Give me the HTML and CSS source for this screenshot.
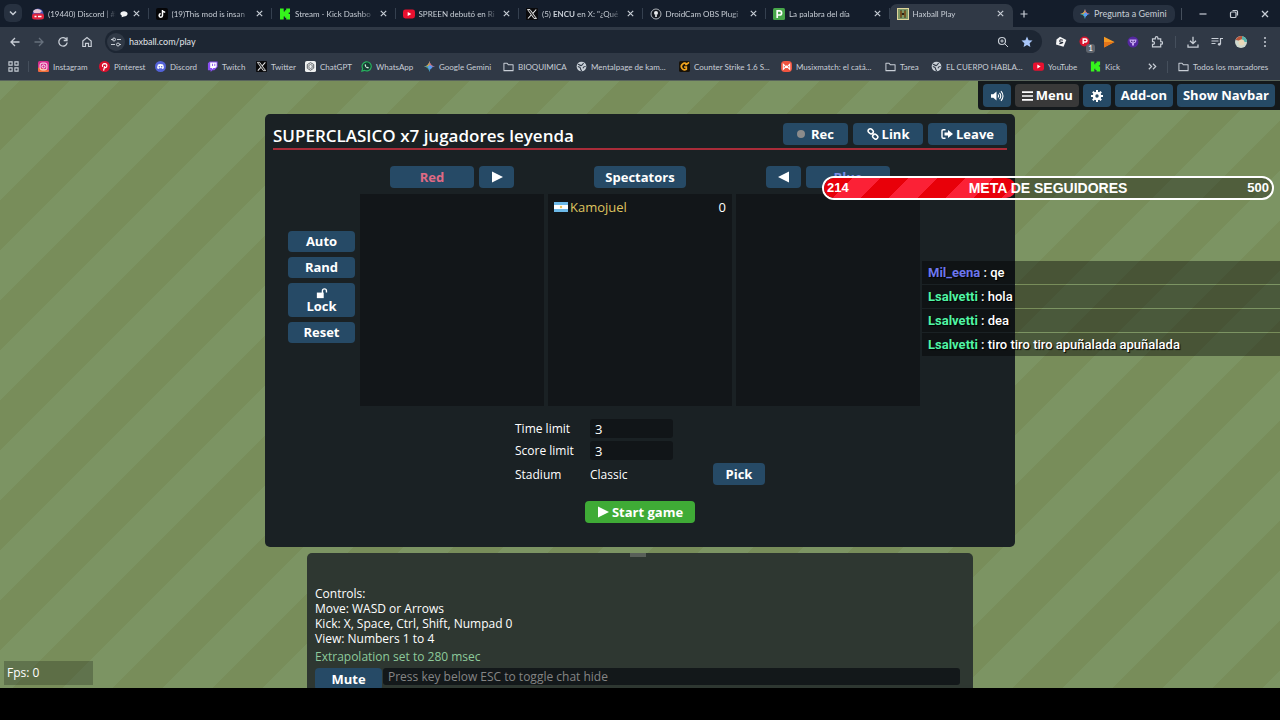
FILE: index.html
```html
<!DOCTYPE html>
<html lang="es">
<head>
  <meta charset="UTF-8">
  <title>Haxball Play</title>
  <meta name="viewport" content="width=device-width, initial-scale=1">
  <link rel="stylesheet" href="styles.css">
</head>
<body>

  <!-- Shared icons -->
  <svg class="sprite" aria-hidden="true">
    <symbol id="close" viewBox="0 0 10 10"><path d="M2 2l6 6M8 2l-6 6" stroke="currentColor" stroke-width="1.3" fill="none"/></symbol>
    <symbol id="folder" viewBox="0 0 12 12"><path d="M1 2.500h3.500l1.200 1.500H11v6.500H1z" fill="none" stroke="currentColor" stroke-width="1.100" stroke-linejoin="round"/></symbol>
    <symbol id="globe" viewBox="0 0 12 12"><circle cx="6" cy="6" r="5.300" fill="#c9d0d8"/><path d="M2 3.500c2 0 2 1.500 3.500 1.500S7 3 8.500 2.500M2 6c2 .5 3 1 3 2.500S6 10 6 11M10.500 6C9 6 7.500 6.500 8 8" stroke="#303946" stroke-width="1.200" fill="none"/></symbol>
    <symbol id="kick" viewBox="0 0 12 12"><path fill="#35f51c" d="M1 .5h3.700v3h1.200V2.200h1.300V.5H11v4H9.700v1.500H11v5.500H7.200V9.800H5.900V8.500H4.700v3H1z"/></symbol>
    <symbol id="youtube" viewBox="0 0 12 12"><rect x="0" y="1.500" width="12" height="9" rx="2.400" fill="#e9102f"/><path d="M4.700 3.900L8.300 6 4.700 8.100z" fill="#fff"/></symbol>
    <symbol id="x-logo" viewBox="0 0 12 12"><rect width="12" height="12" rx="1" fill="#0a0a0c"/><path d="M1.500 1.500h2.500l6.500 9H8z" fill="#333" stroke="#e8e8e8" stroke-width=".9"/><path d="M10.200 1.500L6.800 5.300M5.200 7L2 10.500" stroke="#e8e8e8" stroke-width="1.100"/></symbol>
    <symbol id="discord" viewBox="0 0 12 12"><circle cx="6" cy="6" r="6" fill="#5362d8"/><path d="M3.200 3.800q2.800-1 5.600 0 1 2 .9 4.200l-1.700.8-.6-.9H4.600l-.6.9L2.300 8q-.1-2.200.9-4.200z" fill="#fff"/><circle cx="4.700" cy="6.300" r=".8" fill="#5362d8"/><circle cx="7.300" cy="6.300" r=".8" fill="#5362d8"/></symbol>
    <symbol id="gemini" viewBox="0 0 12 12"><path d="M6 0q.8 5.200 6 6-5.200.8-6 6-.8-5.200-6-6 5.200-.8 6-6z" fill="#4f8df0"/><path d="M6 0q.8 5.200 6 6H6z" fill="#e5675a"/><path d="M0 6q5.200-.8 6-6v6z" fill="#dca637"/><path d="M0 6q5.200.8 6 6V6z" fill="#45a87c"/><circle cx="6.500" cy="6.500" r="2.200" fill="#5b9bf3"/></symbol>
    <symbol id="play" viewBox="0 0 12 12"><path d="M1 .5L12 6 1 11.500z" fill="currentColor"/></symbol>
  </svg>

  <!-- Browser window -->
  <header class="browser">
    <div class="tab-strip">
      <button class="tab-search" aria-label="Buscar pestañas"><svg viewBox="0 0 10 10"><path d="M2 3.500l3 3 3-3" fill="none" stroke="currentColor" stroke-width="1.500"/></svg></button>
      <nav class="tabs" aria-label="Pestañas">
        <div class="tab">
          <svg class="fav" viewBox="0 0 12 12"><circle cx="6" cy="6" r="5.500" fill="#4c57bb"/><path d="M1 3q4-4 9 0l-2 2H2z" fill="#e8c9d4"/><rect x="0" y="5.500" width="12" height="6" rx="2.500" fill="#e0233c"/><path d="M2.500 8.500h2M6 8.500h3.500" stroke="#fff" stroke-width="1.300"/></svg>
          <a href="#">(19440) Discord | #⊦</a>
          <svg class="bubble" viewBox="0 0 10 10"><path d="M5 1.500c2.500 0 4.500 1.300 4.500 3.200S7.500 8 5 8L2 9l.4-1.800C1.200 6.500.5 5.700.5 4.700.5 2.800 2.500 1.500 5 1.500z" fill="#f2f4f6"/></svg>
          <button class="close" aria-label="Cerrar"><svg><use href="#close"/></svg></button>
        </div>
        <div class="tab">
          <svg class="fav" viewBox="0 0 12 12"><rect width="12" height="12" rx="2" fill="#050507"/><path d="M6.500 2v5.500a1.700 1.700 0 1 1-1.700-1.700M6.500 2q.3 2 2.700 2.200" fill="none" stroke="#fff" stroke-width="1.500"/></svg>
          <a href="#">(19)This mod is insan</a>
          <button class="close" aria-label="Cerrar"><svg><use href="#close"/></svg></button>
        </div>
        <div class="tab">
          <svg class="fav"><use href="#kick"/></svg>
          <a href="#">Stream - Kick Dashbo</a>
          <button class="close" aria-label="Cerrar"><svg><use href="#close"/></svg></button>
        </div>
        <div class="tab">
          <svg class="fav"><use href="#youtube"/></svg>
          <a href="#">SPREEN debutó en Ri</a>
          <button class="close" aria-label="Cerrar"><svg><use href="#close"/></svg></button>
        </div>
        <div class="tab">
          <svg class="fav"><use href="#x-logo"/></svg>
          <a href="#">(5) <b>ENCU</b> en X: "¿Qué</a>
          <button class="close" aria-label="Cerrar"><svg><use href="#close"/></svg></button>
        </div>
        <div class="tab">
          <svg class="fav" viewBox="0 0 12 12"><circle cx="6" cy="6" r="5" fill="#14181f" stroke="#aeb4bb" stroke-width="1"/><circle cx="6" cy="5" r="2" fill="#e8eaec"/><path d="M5 6h2v3H5z" fill="#c4c8cc"/></svg>
          <a href="#">DroidCam OBS Plugi</a>
          <button class="close" aria-label="Cerrar"><svg><use href="#close"/></svg></button>
        </div>
        <div class="tab">
          <svg class="fav" viewBox="0 0 12 12"><rect width="12" height="12" rx="1.500" fill="#47a64a"/><path d="M4.200 10V2.800h2.300a2.100 2.100 0 0 1 0 4.200H4.200" fill="none" stroke="#fff" stroke-width="1.700"/></svg>
          <a href="#">La palabra del día</a>
          <button class="close" aria-label="Cerrar"><svg><use href="#close"/></svg></button>
        </div>
        <div class="tab active">
          <svg class="fav" viewBox="0 0 12 12"><rect x=".5" y=".5" width="11" height="11" fill="#7d9563" stroke="#e0d59a"/><path d="M4 2.500v7M8 2.500v7M4 6h4" stroke="#2b2418" stroke-width="1.800"/><path d="M4 3v6M8 3v6" stroke="#d9902f" stroke-width=".8"/></svg>
          <a href="#">Haxball Play</a>
          <button class="close" aria-label="Cerrar"><svg><use href="#close"/></svg></button>
        </div>
      </nav>
      <div class="window-tools">
        <button class="new-tab" aria-label="Nueva pestaña"><svg viewBox="0 0 10 10"><path d="M5 1.500v7M1.500 5h7" stroke="currentColor" stroke-width="1.200"/></svg></button>
        <button class="gemini"><svg><use href="#gemini"/></svg>Pregunta a Gemini</button>
        <span class="divider"></span>
        <button class="win" aria-label="Minimizar"><svg viewBox="0 0 10 10"><path d="M1.500 5h7" stroke="currentColor" stroke-width="1.200"/></svg></button>
        <button class="win" aria-label="Restaurar"><svg viewBox="0 0 10 10"><rect x="1.500" y="3" width="5.500" height="5.500" rx="1" fill="none" stroke="currentColor" stroke-width="1.200"/><path d="M3.500 1.500h4q1 0 1 1v4" fill="none" stroke="currentColor" stroke-width="1.200"/></svg></button>
        <button class="win" aria-label="Cerrar ventana"><svg><use href="#close"/></svg></button>
      </div>
    </div>

    <div class="toolbar">
      <button class="tool" aria-label="Atrás"><svg viewBox="0 0 12 12"><path d="M10.500 6H2M6 2L2 6l4 4" fill="none" stroke="currentColor" stroke-width="1.300"/></svg></button>
      <button class="tool dim" aria-label="Adelante"><svg viewBox="0 0 12 12"><path d="M1.500 6H10M6 2l4 4-4 4" fill="none" stroke="currentColor" stroke-width="1.300"/></svg></button>
      <button class="tool" aria-label="Recargar"><svg viewBox="0 0 12 12"><path d="M9.500 3.500A4.200 4.200 0 1 0 10.200 6.500M10 1.200v3.300H6.700" fill="none" stroke="currentColor" stroke-width="1.300"/></svg></button>
      <button class="tool" aria-label="Inicio"><svg viewBox="0 0 12 12"><path d="M1.800 5L6 1.500 10.200 5v5.500H7.500V7.300h-3v3.200H1.800z" fill="none" stroke="currentColor" stroke-width="1.200"/></svg></button>
      <div class="address">
        <button class="site-info" aria-label="Información del sitio"><svg viewBox="0 0 12 12"><path d="M1 3.500h2.500M7 3.500h4M1 8.500h4M9 8.500h2" stroke="currentColor" stroke-width="1.200"/><circle cx="4" cy="3.500" r="1.500" fill="none" stroke="currentColor"/><circle cx="8" cy="8.500" r="1.500" fill="none" stroke="currentColor"/></svg></button>
        <input type="text" value="haxball.com/play" aria-label="Dirección">
        <button class="tool" aria-label="Zoom"><svg viewBox="0 0 12 12"><circle cx="5" cy="5" r="3.500" fill="none" stroke="currentColor" stroke-width="1.200"/><path d="M7.700 7.700L11 11M3.300 5h3.400M5 3.300v3.400" stroke="currentColor"/></svg></button>
        <button class="tool star" aria-label="Favorito"><svg viewBox="0 0 12 12"><path d="M6 .6l1.600 3.600 3.900.4-2.900 2.600.8 3.900L6 9.100l-3.400 2 .8-3.900L.5 4.600l3.900-.4z" fill="currentColor"/></svg></button>
      </div>
      <button class="tool" aria-label="Extensión 1"><svg viewBox="0 0 12 12"><path d="M5 .8L11.300 4 8.500 10.800 1 8.500 1.500 3.500z" fill="#f4f5f6"/><path d="M7.800 4.300Q5 3 4.800 4.800T7 6.400 4.300 7.800" fill="none" stroke="#232a36" stroke-width="1.100"/></svg></button>
      <button class="tool badge-host" aria-label="Bloqueador"><svg viewBox="0 0 12 12"><circle cx="5.500" cy="5.500" r="5" fill="#d8142d"/><path d="M4.200 8V3h2.300a1.500 1.500 0 0 1 0 3H4.200" stroke="#fff" stroke-width="1.400" fill="none"/></svg><span class="badge">1</span></button>
      <button class="tool" aria-label="Extensión 3"><svg viewBox="0 0 12 12"><path d="M1 .8L11.500 6 1 11.500z" fill="#f59a23"/><path d="M1 6h10.500L1 11.500z" fill="#e2741a"/></svg></button>
      <button class="tool" aria-label="Extensión 4"><svg viewBox="0 0 12 12"><circle cx="6" cy="6" r="5.500" fill="#5427a0"/><path d="M2.500 3.500h7Q9.500 7 7 7.200v2.300H5V7.200Q2.500 7 2.500 3.500z" fill="#c3a6ee"/><path d="M4 5l1.500.8M8 5l-1.500.8" stroke="#33126c"/></svg></button>
      <button class="tool" aria-label="Extensiones"><svg viewBox="0 0 12 12"><path d="M1.500 2.800H4.300V2a1.300 1.300 0 0 1 2.600 0v.8h2.800v2.800h.6a1.300 1.300 0 0 1 0 2.600h-.6v2.700H1.500V8.300h.7a1.300 1.300 0 0 0 0-2.600h-.7z" fill="none" stroke="currentColor" stroke-width="1.200"/></svg></button>
      <span class="divider"></span>
      <button class="tool" aria-label="Descargas"><svg viewBox="0 0 12 12"><path d="M6 .8v6.500M3 4.700l3 3 3-3M1 8.500v2.700h10V8.500" fill="none" stroke="currentColor" stroke-width="1.300"/></svg></button>
      <button class="tool" aria-label="Multimedia"><svg viewBox="0 0 12 12"><path d="M.5 2.500h7M.5 5h7M.5 7.500h4M9.500 8V2.500H12" fill="none" stroke="currentColor" stroke-width="1.200"/><circle cx="8.300" cy="8.300" r="1.400" fill="currentColor"/></svg></button>
      <button class="tool" aria-label="Perfil"><svg viewBox="0 0 12 12"><circle cx="6" cy="6" r="6" fill="#cfd9cf"/><path d="M.6 4A6 6 0 0 1 8 .4L6 5z" fill="#b8553a"/><path d="M7 .3A6 6 0 0 1 12 6H7z" fill="#55b3ac"/><circle cx="6.500" cy="6.500" r="3" fill="#ead9b8"/></svg></button>
      <button class="tool" aria-label="Menú"><svg viewBox="0 0 12 12"><circle cx="6" cy="2" r="1" fill="currentColor"/><circle cx="6" cy="6" r="1" fill="currentColor"/><circle cx="6" cy="10" r="1" fill="currentColor"/></svg></button>
    </div>

    <nav class="bookmarks" aria-label="Marcadores">
      <a class="apps" href="#" aria-label="Aplicaciones"><svg viewBox="0 0 12 12"><path d="M1 1h3.500v3.500H1zM7.500 1H11v3.500H7.500zM1 7.500h3.500V11H1zM7.500 7.500H11V11H7.500z" fill="none" stroke="currentColor" stroke-width="1.200"/></svg></a>
      <a href="#"><svg viewBox="0 0 12 12"><rect width="12" height="12" rx="2" fill="#d62d8d"/><path d="M0 7l12 3v0q0 2-2 2H2q-2 0-2-2z" fill="#f2703a"/><rect x="2.300" y="2.300" width="7.400" height="7.400" rx="2" fill="none" stroke="#fff"/><circle cx="6" cy="6" r="1.700" fill="none" stroke="#fff"/></svg><span>Instagram</span></a>
      <a href="#"><svg viewBox="0 0 12 12"><circle cx="6" cy="6" r="6" fill="#d9102d"/><path d="M5 10.500l1.200-5M4 6.500Q3 3 6.300 2.800 9 3 8.500 5.500 7.800 8 5.700 7" fill="none" stroke="#fff" stroke-width="1.300"/></svg><span>Pinterest</span></a>
      <a href="#"><svg><use href="#discord"/></svg><span>Discord</span></a>
      <a href="#"><svg viewBox="0 0 12 12"><path d="M1 2.500L3 .5h8.500v6L8 10H6l-2 2v-2H1z" fill="#8b4ff2"/><path d="M3.500 1.500h7V6L9 7.500H7L5.500 9V7.500h-2z" fill="#fff"/><path d="M6 3v2.500M8.500 3v2.500" stroke="#8b4ff2"/></svg><span>Twitch</span></a>
      <a href="#"><svg><use href="#x-logo"/></svg><span>Twitter</span></a>
      <a href="#"><svg viewBox="0 0 12 12"><rect width="12" height="12" rx="2" fill="#eef0f0"/><path d="M6 1.800l3.500 2v4L6 10.200l-3.500-2.300v-4z" fill="none" stroke="#54595e"/><path d="M4.200 4.800L6 3.800l1.900 1v2.400L6 8.300 4.200 7.200z" fill="none" stroke="#54595e" stroke-width=".8"/></svg><span>ChatGPT</span></a>
      <a href="#"><svg viewBox="0 0 12 12"><path d="M1 11l.8-2.800A5 5 0 1 1 3.800 10.200z" fill="#173c33" stroke="#27b35e" stroke-width="1.300"/><path d="M4 3.800q-.2 3.500 4 4.300l.5-1.200-1.300-.7-.7.500L5.200 5.400l.5-.6-.6-1.300z" fill="#d9f4e3"/></svg><span>WhatsApp</span></a>
      <a href="#"><svg><use href="#gemini"/></svg><span>Google Gemini</span></a>
      <a href="#"><svg><use href="#folder"/></svg><span>BIOQUIMICA</span></a>
      <a href="#"><svg><use href="#globe"/></svg><span>Mentalpage de kam...</span></a>
      <a href="#"><svg viewBox="0 0 12 12"><rect width="12" height="12" rx="2" fill="#17120a"/><path d="M8.500 3.500A3.500 3.500 0 1 0 8 9V6.500H5.500M7 4.500l4-3" fill="none" stroke="#f2a51e" stroke-width="1.800"/></svg><span>Counter Strike 1.6 S...</span></a>
      <a href="#"><svg viewBox="0 0 12 12"><rect width="12" height="12" rx="4" fill="#f0543f"/><path d="M2.500 9V3.500L6 7l3.500-3.500V9L6 5.500z" fill="none" stroke="#fff" stroke-width="1.100"/></svg><span>Musixmatch: el catá...</span></a>
      <a href="#"><svg><use href="#folder"/></svg><span>Tarea</span></a>
      <a href="#"><svg><use href="#globe"/></svg><span>EL CUERPO HABLA...</span></a>
      <a href="#"><svg><use href="#youtube"/></svg><span>YouTube</span></a>
      <a href="#"><svg><use href="#kick"/></svg><span>Kick</span></a>
      <button class="more" aria-label="Más marcadores"><svg viewBox="0 0 12 12"><path d="M2 3l3 3-3 3M6.500 3l3 3-3 3" fill="none" stroke="currentColor" stroke-width="1.300"/></svg></button>
      <a class="all" href="#"><svg><use href="#folder"/></svg><span>Todos los marcadores</span></a>
    </nav>
  </header>

  <!-- Game -->
  <main class="stage">
    <section class="room">
      <div class="room-head">
        <h1>SUPERCLASICO x7 jugadores leyenda</h1>
        <button class="btn rec"><span class="dot"></span>Rec</button>
        <button class="btn link"><svg viewBox="0 0 12 12"><rect x="1" y="1.200" width="5.500" height="4.200" rx="2.100" transform="rotate(45 3.700 3.300)" fill="none" stroke="currentColor" stroke-width="1.500"/><rect x="5.500" y="6.500" width="5.500" height="4.200" rx="2.100" transform="rotate(45 8.200 8.600)" fill="none" stroke="currentColor" stroke-width="1.500"/><path d="M4.800 4.800l2.500 2.500" stroke="currentColor" stroke-width="1.300"/></svg>Link</button>
        <button class="btn leave"><svg viewBox="0 0 12 12"><path d="M4.500 1.800H2.300Q1 1.800 1 3v6q0 1.200 1.300 1.200h2.200" fill="none" stroke="currentColor" stroke-width="1.400"/><path d="M3.500 4.500H7V2l5 4-5 4V7.500H3.500z" fill="currentColor"/></svg>Leave</button>
      </div>

      <div class="teams">
        <div class="team-head red-head">
          <button class="btn team red">Red</button>
          <button class="btn arrow" aria-label="Mover a rojo"><svg><use href="#play"/></svg></button>
        </div>
        <div class="team-head"><button class="btn spec">Spectators</button></div>
        <div class="team-head">
          <button class="btn arrow back" aria-label="Mover a azul"><svg><use href="#play"/></svg></button>
          <button class="btn team blue">Blue</button>
        </div>

        <div class="tools">
          <button class="btn">Auto</button>
          <button class="btn">Rand</button>
          <button class="btn lock"><svg viewBox="0 0 14 12"><path d="M1 5.500h8V12H1z" fill="currentColor"/><path d="M7.500 6V3.500a2.300 2.300 0 0 1 4.700 0V5.500" fill="none" stroke="currentColor" stroke-width="1.600"/></svg>Lock</button>
          <button class="btn">Reset</button>
        </div>
        <ul class="list"></ul>
        <ul class="list">
          <li>
            <svg class="flag" viewBox="0 0 14 10"><rect width="14" height="10" fill="#6cb9e8"/><rect y="3" width="14" height="4" fill="#fff"/><circle cx="7" cy="5" r="1.200" fill="#e9c45a"/></svg>
            <span class="player">Kamojuel</span>
            <span>0</span>
          </li>
        </ul>
        <ul class="list"></ul>
      </div>

      <form class="settings">
        <label for="time">Time limit</label>
        <input id="time" type="text" value="3">
        <label for="score">Score limit</label>
        <input id="score" type="text" value="3">
        <span class="name">Stadium</span>
        <span>Classic</span>
        <button class="btn pick" type="button">Pick</button>
      </form>
      <button class="btn start"><svg><use href="#play"/></svg>Start game</button>
    </section>

    <section class="chat">
      <span class="handle"></span>
      <div class="log">
        <p>Controls:</p>
        <p>Move: WASD or Arrows</p>
        <p>Kick: X, Space, Ctrl, Shift, Numpad 0</p>
        <p>View: Numbers 1 to 4</p>
        <p class="notice">Extrapolation set to 280 msec</p>
      </div>
      <div class="chat-input">
        <button class="btn">Mute</button>
        <input type="text" placeholder="Press key below ESC to toggle chat hide" aria-label="Chat">
      </div>
    </section>

    <nav class="game-menu" aria-label="Juego">
      <button class="btn" aria-label="Sonido"><svg viewBox="0 0 14 12"><path d="M1 4.200h2.300L6.500 1.500v9L3.300 7.800H1z" fill="currentColor"/><path d="M8 4.500q1.200 1.500 0 3M9.500 2.800q2.500 3.200 0 6.400M11 1.200q4 4.800 0 9.600" fill="none" stroke="currentColor" stroke-width="1.100"/></svg></button>
      <button class="btn gray"><svg viewBox="0 0 12 12"><path d="M.5 2.200h11M.5 6h11M.5 9.800h11" stroke="currentColor" stroke-width="1.700"/></svg>Menu</button>
      <button class="btn" aria-label="Ajustes"><svg viewBox="0 0 12 12"><circle cx="6" cy="6" r="3" fill="none" stroke="currentColor" stroke-width="2.600"/><path d="M6 0v12M0 6h12M1.800 1.800l8.400 8.400M10.200 1.800l-8.400 8.400" stroke="currentColor" stroke-width="2" stroke-dasharray="2.500 7 2.500"/></svg></button>
      <button class="btn">Add-on</button>
      <button class="btn">Show Navbar</button>
    </nav>

    <!-- Stream overlays -->
    <div class="goal" role="progressbar" aria-label="Meta de seguidores" aria-valuemin="0" aria-valuemax="500" aria-valuenow="214">
      <div class="goal-fill" style="width: 42.8%"></div>
      <div class="goal-text"><span>214</span><strong>META DE SEGUIDORES</strong><span>500</span></div>
    </div>
    <ul class="stream-chat">
      <li><b class="violet">Mil_eena</b> : qe</li>
      <li><b>Lsalvetti</b> : hola</li>
      <li><b>Lsalvetti</b> : dea</li>
      <li><b>Lsalvetti</b> : tiro tiro tiro apuñalada apuñalada</li>
    </ul>
    <div class="fps">Fps: 0</div>
  </main>

  <footer class="letterbox"></footer>
</body>
</html>
```
FILE: styles.css
```css
/* RESET & BASE */
* {
  margin: 0;
  padding: 0;
  box-sizing: border-box;
}
body {
  display: flex;
  flex-direction: column;
  height: 100vh;
  overflow: hidden;
  background: #000;
  color: #fff;
  font: 12px/15px 'Open Sans', 'Noto Sans', sans-serif;
}
button, input {
  border: 0;
  background: none;
  color: inherit;
  font: inherit;
}
a {
  color: inherit;
  text-decoration: none;
}
ul { list-style: none; }
svg {
  display: block;
  flex: none;
  width: 12px;
  height: 12px;
}
.sprite {
  position: absolute;
  width: 0;
  height: 0;
}

/* BROWSER */
.browser {
  flex: none;
  background: #303946;
  color: #c8ced6;
  font: 9px/12px Lato, 'Noto Sans', sans-serif;
  border-bottom: 1px solid #59655c;
}
.browser button {
  display: flex;
  align-items: center;
  justify-content: center;
}
.tab-strip {
  display: flex;
  height: 27px;
  background: #141d2b;
}
.tab-search {
  width: 18px;
  height: 18px;
  margin: 4px 3px 0 4px;
  border-radius: 6px;
  background: #273140;
}
.tab-search svg, .new-tab svg, .win svg {
  width: 10px;
  height: 10px;
}
.tabs {
  display: flex;
  flex: 1;
  min-width: 0;
  font-size: 8px;
}
.tab {
  display: flex;
  flex: 1;
  align-items: center;
  gap: 4px;
  min-width: 0;
  padding: 0 8px 0 7px;
  background: linear-gradient(#35404f, #35404f) no-repeat right 8px / 1px 11px;
}
.tab a {
  flex: 1;
  overflow: hidden;
  white-space: nowrap;
  -webkit-mask-image: linear-gradient(90deg, #000 82%, transparent);
  mask-image: linear-gradient(90deg, #000 82%, transparent);
}
.tab .bubble {
  width: 8px;
  height: 8px;
}
.tab.active {
  margin-top: 4px;
  padding-bottom: 4px;
  border-radius: 7px 7px 0 0;
  background: #303946;
}
.close, .close svg {
  width: 9px;
  height: 9px;
}
.window-tools {
  display: flex;
  align-items: center;
  width: 267px;
}
.new-tab {
  width: 22px;
  height: 20px;
}
.gemini {
  gap: 4px;
  height: 18px;
  margin: 0 6px 0 38px;
  padding: 0 8px 0 7px;
  border-radius: 7px;
  background: #273140;
  white-space: nowrap;
}
.gemini svg {
  width: 10px;
  height: 10px;
}
.divider {
  width: 1px;
  height: 12px;
  background: #454f5c;
}
.win {
  flex: 1;
  height: 27px;
}
.divider + .win { margin-left: 6px; }

.toolbar {
  display: flex;
  align-items: center;
  height: 29px;
  padding: 0 3px;
}
.tool {
  width: 24px;
  height: 22px;
}
.dim { color: #66707c; }
.address {
  display: flex;
  flex: 1;
  align-items: center;
  height: 23px;
  margin: 0 7px 0 6px;
  padding: 0 3px 0 2px;
  border-radius: 12px;
  background: #1d2633;
}
.address input {
  flex: 1;
  min-width: 0;
  padding-left: 4px;
  color: #e0e4e9;
  font-size: 9px;
  outline: 0;
}
.site-info {
  width: 18px;
  height: 18px;
  border-radius: 9px;
  background: #303946;
}
.star { color: #a9c7fa; }
.badge-host { position: relative; }
.badge {
  position: absolute;
  right: 2px;
  bottom: 0;
  width: 9px;
  height: 9px;
  border-radius: 3px;
  background: #5e646c;
  color: #fff;
  font-size: 8px;
  line-height: 9px;
}
.toolbar > .divider { margin: 0 5px 0 6px; }

.bookmarks {
  display: grid;
  grid-template-columns: 30fr 61fr 56fr 52fr 49fr 49fr 56fr 63fr 79fr 73fr 103fr 102fr 104fr 46fr 102fr 57fr 52fr 25fr 113fr;
  align-items: center;
  height: 24px;
  padding: 0 0 3px 8px;
  font-size: 8px;
  white-space: nowrap;
}
.bookmarks a {
  display: flex;
  align-items: center;
  gap: 4px;
  min-width: 0;
}
.bookmarks svg {
  width: 11px;
  height: 11px;
}
.bookmarks .apps {
  width: 21px;
  border-right: 1px solid #454f5c;
}
.bookmarks .more { width: 20px; }
.bookmarks .all {
  padding-left: 10px;
  border-left: 1px solid #454f5c;
}

/* STAGE */
.stage {
  position: relative;
  display: flex;
  flex: 1;
  flex-direction: column;
  align-items: center;
  gap: 6px;
  min-height: 0;
  padding-top: 33px;
  overflow: hidden;
  background: linear-gradient(135deg, #788d5a 25%, #7c9463 25% 50%, #788d5a 50% 75%, #7c9463 75%) 0 20px / 100px 100px;
}
.letterbox {
  flex: none;
  height: 32px;
}
.btn {
  display: flex;
  align-items: center;
  justify-content: center;
  gap: 3px;
  height: 22px;
  border-radius: 4px;
  background: #264a66;
  font-size: 13px;
  font-weight: 700;
  white-space: nowrap;
}

/* ROOM */
.room {
  display: flex;
  flex: none;
  flex-direction: column;
  width: 750px;
  max-width: 100%;
  padding: 9px 8px 24px;
  border-radius: 5px;
  background: #1a2124;
}
.room-head {
  display: flex;
  gap: 5px;
  border-bottom: 2px solid #a92c39;
}
.room-head h1 {
  flex: 1;
  font-size: 17px;
  font-weight: 600;
  line-height: 25px;
}
.rec { width: 65px; gap: 6px; }
.link { width: 70px; }
.leave { width: 79px; }
.dot {
  width: 8px;
  height: 8px;
  border-radius: 50%;
  background: #8b8b8b;
}
.teams {
  display: grid;
  grid-template-columns: 1fr repeat(3, 184px) 1fr;
  gap: 6px 4px;
  margin-top: 16px;
}
.team-head {
  display: flex;
  justify-content: center;
  gap: 5px;
}
.red-head { grid-column: 2; }
.team { width: 84px; }
.red { color: #e06a85; }
.blue { color: #7d8fe8; }
.arrow { width: 35px; }
.back svg { transform: scaleX(-1); }
.spec { width: 92px; }
.tools {
  display: flex;
  grid-column: 1;
  flex-direction: column;
  gap: 5px;
  width: 67px;
  margin: 37px 1px 0 0;
  justify-self: end;
}
.tools .btn { height: 21px; }
.tools .lock {
  flex-direction: column;
  gap: 0;
  height: 34px;
}
.list {
  height: 212px;
  padding: 4px 6px;
  background: #121619;
}
.list li {
  display: flex;
  align-items: center;
  gap: 2px;
  font-size: 13px;
  line-height: 18px;
}
.flag {
  width: 14px;
  height: 10px;
}
.player {
  flex: 1;
  color: #dfc35f;
}
.settings {
  display: grid;
  grid-template-columns: 75px 83px 1fr;
  align-items: center;
  align-self: center;
  width: 250px;
  margin-top: 13px;
  row-gap: 3px;
}
.settings label, .settings .name { grid-column: 1; }
.settings input {
  height: 19px;
  padding: 0 5px;
  border-radius: 3px;
  background: #111518;
  font-size: 13px;
}
.settings .pick {
  width: 52px;
  justify-self: end;
}
.start {
  align-self: center;
  width: 110px;
  margin-top: 16px;
  background: #3fab36;
}

/* ROOM CHAT */
.chat {
  display: flex;
  flex: none;
  flex-direction: column;
  width: 666px;
  max-width: 100%;
  padding: 0 13px 0 8px;
  border-radius: 5px 5px 0 0;
  background: #2e3731;
}
.handle {
  align-self: center;
  width: 16px;
  height: 4px;
  background: #596059;
}
.log { padding: 29px 0 4px; }
.notice {
  margin-top: 3px;
  color: #8dca9b;
}
.chat-input {
  display: flex;
  gap: 1px;
}
.chat-input .btn { width: 67px; }
.chat-input input {
  flex: 1;
  height: 17px;
  padding: 0 5px;
  border-radius: 3px;
  background: #13181a;
}
.chat-input input::placeholder { color: #858585; }

/* GAME MENU */
.game-menu {
  position: absolute;
  top: 0;
  right: 0;
  display: flex;
  gap: 4px;
  padding: 3px 5px;
  border-radius: 0 0 0 4px;
  background: #14191c;
}
.game-menu .btn {
  height: 23px;
  padding: 0 6px;
}
.game-menu .gray {
  gap: 2px;
  background: #393939;
}
.game-menu svg { width: 16px; }
.game-menu .gray svg { width: 13px; }

/* STREAM OVERLAYS */
.goal {
  position: absolute;
  top: 95px;
  right: 6px;
  width: 452px;
  height: 24px;
  overflow: hidden;
  border: 2px solid #fff;
  border-radius: 12px;
  background: rgba(0, 0, 0, 0.33);
}
.goal-fill {
  height: 100%;
  border-radius: 0 10px 10px 0;
  background: repeating-linear-gradient(135deg, #e80009 0 20px, #fb2136 20px 40px);
}
.goal-text {
  position: absolute;
  inset: 0;
  display: flex;
  align-items: center;
  justify-content: space-between;
  padding: 0 3px;
  font: bold 13px/20px 'Liberation Sans', Arial, sans-serif;
}
.goal-text strong { font-size: 14px; }
.stream-chat {
  position: absolute;
  top: 180px;
  right: 0;
  display: flex;
  flex-direction: column;
  gap: 1px;
  width: 358px;
  font: 500 13px/23px Roboto, sans-serif;
  text-shadow: 1px 1px 1px #000;
}
.stream-chat li {
  padding-left: 6px;
  background: rgba(0, 0, 0, 0.4);
}
.stream-chat b {
  color: #50f5a5;
  font-weight: 700;
}
.stream-chat .violet { color: #6c76ee; }
.fps {
  position: absolute;
  bottom: 3px;
  left: 4px;
  width: 89px;
  padding: 0 3px;
  background: rgba(0, 0, 0, 0.22);
  line-height: 24px;
}
```
